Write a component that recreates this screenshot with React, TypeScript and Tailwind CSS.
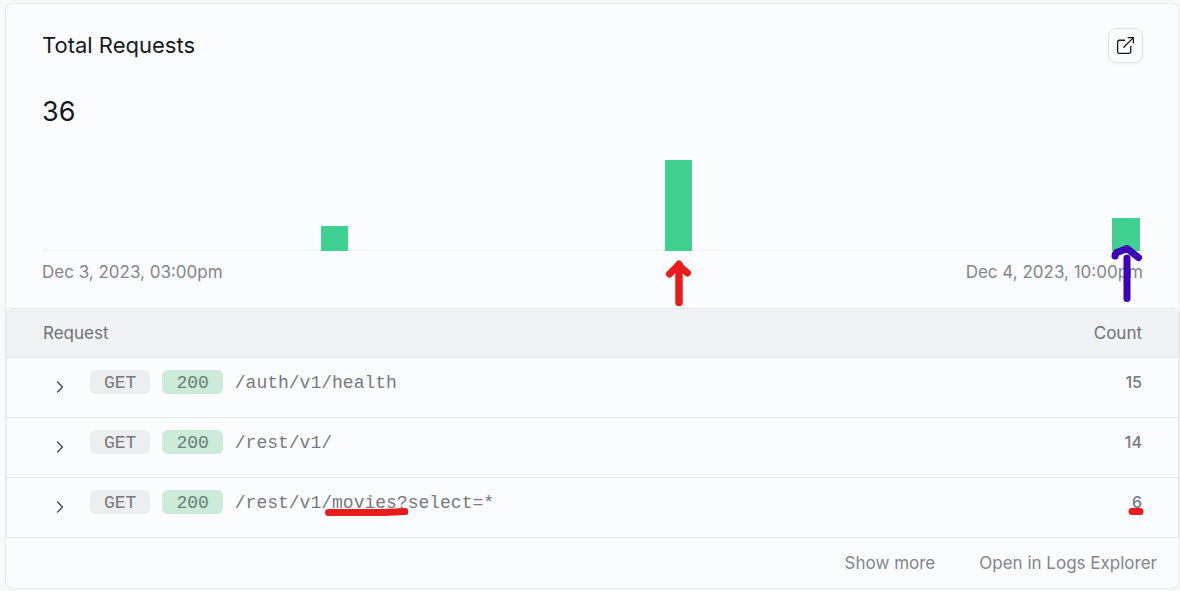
import { ChevronRight, ExternalLink } from 'lucide-react'

interface RequestRow {
  method: string
  status: number
  path: string
  count: number
  marked?: boolean
}

const ROWS: RequestRow[] = [
  { method: 'GET', status: 200, path: '/auth/v1/health', count: 15 },
  { method: 'GET', status: 200, path: '/rest/v1/', count: 14 },
  { method: 'GET', status: 200, path: '/rest/v1/movies?select=*', count: 6, marked: true },
]

// one slot per hour, Dec 3 03:00pm to Dec 4 10:00pm
const HOURS = 32
const BARS: Record<number, { height: number; arrow?: 'red' | 'blue' }> = {
  8: { height: 25 },
  18: { height: 91, arrow: 'red' },
  31: { height: 33, arrow: 'blue' },
}

function RedArrow() {
  return (
    <svg className="absolute left-1/2 top-full -translate-x-1/2 mt-2 z-10" width="30" height="50" viewBox="0 0 30 50" fill="none" stroke="#e81c1c" strokeLinecap="round" strokeLinejoin="round" aria-hidden="true">
      <path d="M15 7V43.500" strokeWidth="7.500" />
      <path d="M5.500 15L11.500 9L15 5L17.500 9L23.500 14" strokeWidth="7" />
    </svg>
  )
}

function BlueArrow() {
  return (
    <svg className="absolute left-1/2 top-full -translate-x-1/2 -mt-2 z-10" width="34" height="62" viewBox="0 0 34 62" fill="none" stroke="#3d00b8" strokeLinecap="round" strokeLinejoin="round" aria-hidden="true">
      <path d="M18 15V55.500" strokeWidth="7" />
      <path d="M6 13Q6.500 9 10.500 8.500L18 5.500L29.500 14.500" strokeWidth="7" />
    </svg>
  )
}

function RequestsChart() {
  return (
    <div className="px-9">
      <div className="flex h-[108px] items-end border-b border-[#f0f1f2]">
        {Array.from({ length: HOURS }, (_, i) => {
          const bar = BARS[i]
          return (
            <div key={i} className="flex flex-1 justify-center">
              {bar && (
                <div className="relative -mb-px w-4/5 bg-[#40d190]" style={{ height: bar.height }}>
                  {bar.arrow === 'red' && <RedArrow />}
                  {bar.arrow === 'blue' && <BlueArrow />}
                </div>
              )}
            </div>
          )
        })}
      </div>
      <div className="mt-[9px] flex justify-between text-[17px] leading-6 text-[#80868b]">
        <span>Dec 3, 2023, 03:00pm</span>
        <span>Dec 4, 2023, 10:00pm</span>
      </div>
    </div>
  )
}

function RequestPath({ row }: { row: RequestRow }) {
  if (!row.marked) return <span>{row.path}</span>
  const [before, after] = row.path.split('movies?')
  return (
    <span>
      {before}
      <span className="relative">
        movies?
        <svg className="absolute -left-2 top-3 h-3 w-[84px]" viewBox="0 0 84 12" fill="none" stroke="#e81c1c" strokeLinecap="round" strokeLinejoin="round" aria-hidden="true">
          <path d="M4.500 7.500H59L81 6.500" strokeWidth="7" />
        </svg>
      </span>
      {after}
    </span>
  )
}

function RequestsTable() {
  return (
    <div className="overflow-hidden rounded-t-md border border-[#e4e6e9]">
      <table className="w-full">
        <thead className="bg-[#f1f2f4]">
          <tr className="text-[17px] leading-6 text-[#6d7378]">
            <th className="py-3 pl-9 text-left font-normal">Request</th>
            <th className="py-3 pr-9 text-right font-normal">Count</th>
          </tr>
        </thead>
        <tbody>
          {ROWS.map(row => (
            <tr key={row.path} className="border-t border-[#e4e6e9] text-[#747a7f]">
              <td className="pb-[23px] pl-[43px] pt-3">
                <div className="flex h-6 items-center font-['Liberation_Mono',monospace] text-lg leading-[26px]">
                  <button aria-label={`Expand ${row.path}`} className="mr-5 mt-2.5 text-[#3f4549]">
                    <ChevronRight className="h-5 w-5" strokeWidth={1.5} />
                  </button>
                  <span className="mr-3 h-6 rounded-md bg-[#edeef0] px-3.5 text-[#77797b]">{row.method}</span>
                  <span className="mr-3 h-6 rounded-md bg-[#cbebd8] px-3.5 text-[#6c7e74]">{row.status}</span>
                  <span className="h-6">
                    <RequestPath row={row} />
                  </span>
                </div>
              </td>
              <td className="pb-[23px] pr-9 pt-3 text-right text-base font-medium leading-6">
                <span className="relative">
                  {row.count}
                  {row.marked && (
                    <svg className="absolute -right-0.5 top-3 h-3 w-4" viewBox="0 0 16 12" fill="none" stroke="#e81c1c" strokeLinecap="round" aria-hidden="true">
                      <path d="M4 7.500H12" strokeWidth="7" />
                    </svg>
                  )}
                </span>
              </td>
            </tr>
          ))}
        </tbody>
      </table>
    </div>
  )
}

export default function App() {
  return (
    <div className="min-h-screen bg-[#f8f9fa] pb-[3px] pl-1.5 pr-px pt-1 font-['Inter',sans-serif]">
      <section className="rounded-md bg-[#fbfcfe] shadow-[0_0_2px_rgba(0,0,0,0.2)]">
        <header className="flex items-start justify-between px-9 pt-6">
          <h2 className="text-[22px] leading-[34px] text-[#16191c]">Total Requests</h2>
          <a
            href="#logs"
            aria-label="Open in Logs Explorer"
            className="flex h-[35px] w-[35px] items-center justify-center rounded-lg border border-[#e0e2e4] text-[#16191c] shadow-xs"
          >
            <ExternalLink className="h-[21px] w-[21px]" strokeWidth={1.5} />
          </a>
        </header>
        <p className="mt-7 px-9 text-[27px] leading-[42px] text-[#16191c]">36</p>
        <div className="mt-2.5">
          <RequestsChart />
        </div>
        <div className="mt-6">
          <RequestsTable />
        </div>
        <footer className="flex justify-end gap-11 px-[22px] py-[13px] text-[17px] leading-6 text-[#80868b]">
          <button>Show more</button>
          <a href="#logs">Open in Logs Explorer</a>
        </footer>
      </section>
    </div>
  )
}
